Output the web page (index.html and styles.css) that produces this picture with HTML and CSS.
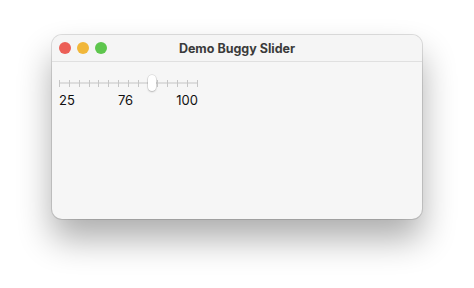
FILE: index.html
```html
<!DOCTYPE html>
<html lang="en">
<head>
    <meta charset="UTF-8">
    <meta name="viewport" content="width=device-width, initial-scale=1.0">
    <title>Demo Buggy Slider</title>
    <link rel="stylesheet" href="styles.css">
</head>
<body>
    <div class="window">
        <div class="titlebar">
            <div class="lights">
                <span class="light red"></span>
                <span class="light yellow"></span>
                <span class="light green"></span>
            </div>
            <div class="title">Demo Buggy Slider</div>
        </div>
        <div class="content">
            <div class="slider">
                <div class="track"></div>
                <div class="ticks">
                    <span></span><span></span><span></span><span></span><span></span>
                    <span></span><span></span><span></span><span></span><span></span>
                    <span></span><span></span><span></span><span></span><span></span>
                </div>
                <div class="thumb"></div>
            </div>
            <div class="labels">
                <span>25</span>
                <span>76</span>
                <span>100</span>
            </div>
        </div>
    </div>
</body>
</html>
```

FILE: styles.css
```css
html {
    height: 100%;
}
body {
    margin: 0;
    min-height: 100%;
    box-sizing: border-box;
    padding: 35px 0 0 52px;
    background: #ffffff;
    font-family: 'Inter', 'Liberation Sans', sans-serif;
}
.window {
    width: 370px;
    height: 184px;
    background-color: #f6f6f6;
    border-radius: 10px;
    box-shadow: 0 0 0 1px rgba(0, 0, 0, 0.12), 0 20px 34px rgba(0, 0, 0, 0.32);
    overflow: hidden;
}
.titlebar {
    height: 26px;
    display: flex;
    align-items: center;
    position: relative;
    background-color: #f5f5f5;
    border-bottom: 1px solid #e0e0e0;
}
.lights {
    display: flex;
    gap: 6px;
    padding-left: 7px;
}
.light {
    width: 12px;
    height: 12px;
    border-radius: 50%;
}
.red { background-color: #ec5f57; }
.yellow { background-color: #f1b73a; }
.green { background-color: #5ec64d; }
.title {
    position: absolute;
    left: 0;
    right: 0;
    text-align: center;
    font-size: 12.5px;
    font-weight: bold;
    color: #3b3b3b;
}
.content {
    padding: 13px 0 0 7px;
}
.slider {
    position: relative;
    width: 139px;
    height: 16px;
    display: flex;
    align-items: center;
}
.track {
    position: absolute;
    left: 0;
    right: 0;
    height: 2px;
    background-color: #dddddd;
    border-radius: 1px;
}
.ticks {
    width: 100%;
    display: flex;
    justify-content: space-between;
    position: relative;
}
.ticks span {
    width: 1px;
    height: 7px;
    background-color: #c6c6c6;
}
.thumb {
    position: absolute;
    left: 89px;
    top: 0;
    width: 8px;
    height: 16px;
    background: #ffffff;
    border-radius: 4px;
    box-shadow: 0 0 0 0.5px rgba(0, 0, 0, 0.15), 0 1px 2px rgba(0, 0, 0, 0.2);
}
.labels {
    width: 139px;
    display: flex;
    justify-content: space-between;
    margin-top: 1px;
    font-size: 13px;
    color: #111111;
}
```
